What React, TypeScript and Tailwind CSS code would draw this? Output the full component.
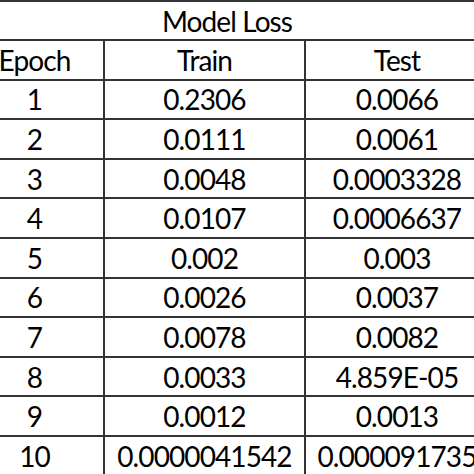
const rows: [string, string, string][] = [
  ["1", "0.2306", "0.0066"],
  ["2", "0.0111", "0.0061"],
  ["3", "0.0048", "0.0003328"],
  ["4", "0.0107", "0.0006637"],
  ["5", "0.002", "0.003"],
  ["6", "0.0026", "0.0037"],
  ["7", "0.0078", "0.0082"],
  ["8", "0.0033", "4.859E-05"],
  ["9", "0.0012", "0.0013"],
  ["10", "0.0000041542", "0.000091735"],
];

function Row({ cells }: { cells: [string, string, string] }) {
  return (
    <div className="grid grid-cols-[139px_201px_182px] h-[39.6px] border-b-2 border-[#333]">
      {cells.map((c, i) => (
        <div
          key={i}
          className={`flex items-center justify-center whitespace-nowrap ${
            i < 2 ? "border-r-2 border-[#333]" : ""
          }`}
        >
          {c}
        </div>
      ))}
    </div>
  );
}

export default function App() {
  return (
    <div className="w-[474px] h-[474px] overflow-hidden bg-white">
      <div
        className="w-[522px] -ml-[34px] border-t-2 border-[#333] text-black text-[28px] tracking-[-0.9px] leading-none"
        style={{ fontFamily: "Lato, 'Open Sans', sans-serif" }}
      >
        {/* Title row spans all columns */}
        <div className="flex items-center justify-center h-[39px] border-b-2 border-[#333]">
          Model Loss
        </div>
        <Row cells={["Epoch", "Train", "Test"]} />
        {rows.map((r) => (
          <Row key={r[0]} cells={r} />
        ))}
      </div>
    </div>
  );
}
